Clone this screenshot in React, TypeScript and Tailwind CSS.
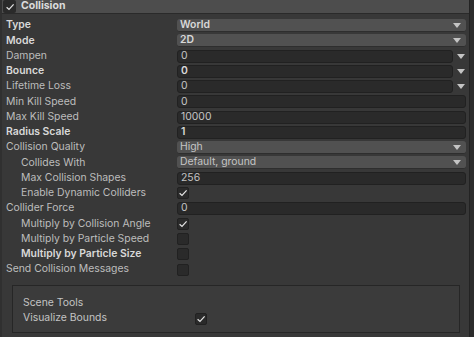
import type { ReactNode } from "react";

type Row = {
  label: string;
  kind: "dropdown" | "field" | "fieldArrow" | "check";
  value?: string;
  checked?: boolean;
  bold?: boolean;
  indent?: boolean;
};

const rows: Row[] = [
  { label: "Type", kind: "dropdown", value: "World", bold: true },
  { label: "Mode", kind: "dropdown", value: "2D", bold: true },
  { label: "Dampen", kind: "fieldArrow", value: "0" },
  { label: "Bounce", kind: "fieldArrow", value: "0", bold: true },
  { label: "Lifetime Loss", kind: "fieldArrow", value: "0" },
  { label: "Min Kill Speed", kind: "field", value: "0" },
  { label: "Max Kill Speed", kind: "field", value: "10000" },
  { label: "Radius Scale", kind: "field", value: "1", bold: true },
  { label: "Collision Quality", kind: "dropdown", value: "High" },
  { label: "Collides With", kind: "dropdown", value: "Default, ground", indent: true },
  { label: "Max Collision Shapes", kind: "field", value: "256", indent: true },
  { label: "Enable Dynamic Colliders", kind: "check", checked: true, indent: true },
  { label: "Collider Force", kind: "field", value: "0" },
  { label: "Multiply by Collision Angle", kind: "check", checked: true, indent: true },
  { label: "Multiply by Particle Speed", kind: "check", indent: true },
  { label: "Multiply by Particle Size", kind: "check", indent: true, bold: true },
  { label: "Send Collision Messages", kind: "check" },
];

function Arrow() {
  return (
    <svg width="8" height="5" viewBox="0 0 8 5" className="shrink-0">
      <path d="M0 0 H8 L4 5 Z" fill="#c4c4c4" />
    </svg>
  );
}

function Tick() {
  return (
    <svg width="10" height="10" viewBox="0 0 10 10">
      <path d="M1.6 5.3 L4 7.5 L8.6 2.3" fill="none" stroke="#e4e4e4" strokeWidth="1.2" />
    </svg>
  );
}

function Check({ checked }: { checked?: boolean }) {
  return (
    <div className="w-[12px] h-[12px] rounded-[2px] bg-[#2a2a2a] border border-[#212121] flex items-center justify-center">
      {checked && <Tick />}
    </div>
  );
}

function Value({ row }: { row: Row }) {
  return <span className={row.bold ? "font-semibold text-[#d8d8d8]" : "text-[#c4c4c4]"}>{row.value}</span>;
}

function Control({ row }: { row: Row }): ReactNode {
  if (row.kind === "dropdown") {
    return (
      <div className="w-[289px] h-[13px] rounded-[3px] bg-[#515151] border-b border-[#2e2e2e] flex items-center justify-between pl-[3px] pr-[5px]">
        <Value row={row} />
        <Arrow />
      </div>
    );
  }
  if (row.kind === "fieldArrow") {
    return (
      <div className="w-[289px] flex items-center">
        <div className="w-[276px] h-[13px] rounded-[3px] bg-[#2a2a2a] border border-[#212121] flex items-center pl-[3px]">
          <Value row={row} />
        </div>
        <div className="ml-[4px]">
          <Arrow />
        </div>
      </div>
    );
  }
  if (row.kind === "field") {
    return (
      <div className="w-[289px] h-[13px] rounded-[3px] bg-[#2a2a2a] border border-[#212121] flex items-center pl-[3px]">
        <Value row={row} />
      </div>
    );
  }
  return <Check checked={row.checked} />;
}

export default function App() {
  return (
    <div
      className="w-[474px] h-[337px] bg-[#383838] flex text-[10.4px] leading-none overflow-hidden"
      style={{ fontFamily: "Inter, 'Liberation Sans', sans-serif" }}
    >
      <div className="w-[469px] flex flex-col border-l-2 border-[#303030]">
        <div className="h-[14px] bg-[#4d4d4d] border-b border-[#2a2a2a] flex items-center gap-[5px] pl-[1px]">
          <div className="w-[13px] h-[13px] rounded-[2px] bg-[#2a2a2a] flex items-center justify-center">
            <Tick />
          </div>
          <span className="font-bold text-[#dcdcdc] text-[10.5px]">Collision</span>
        </div>

        <div className="flex flex-col gap-[2.25px] pt-[5px]">
          {rows.map((row, i) => (
            <div key={i} className="h-[13px] flex items-center">
              <div
                className={
                  "w-[175px] whitespace-nowrap " +
                  (row.indent ? "pl-[19px] " : "pl-[4px] ") +
                  (row.bold ? "font-semibold text-[#d8d8d8]" : "text-[#bdbdbd]")
                }
              >
                {row.label}
              </div>
              <Control row={row} />
            </div>
          ))}
        </div>

        <div className="ml-[10px] mt-[9px] w-[448px] h-[48px] border border-[#262626] bg-[#3b3b3b] flex flex-col pt-[11px] pl-[10px] gap-[2px] text-[#c4c4c4]">
          <div className="h-[13px] flex items-center">Scene Tools</div>
          <div className="h-[13px] flex items-center">
            <span className="w-[172px]">Visualize Bounds</span>
            <Check checked />
          </div>
        </div>
      </div>
      <div className="flex-1 bg-[#2c2c2c] border-l border-[#232323]" />
    </div>
  );
}
